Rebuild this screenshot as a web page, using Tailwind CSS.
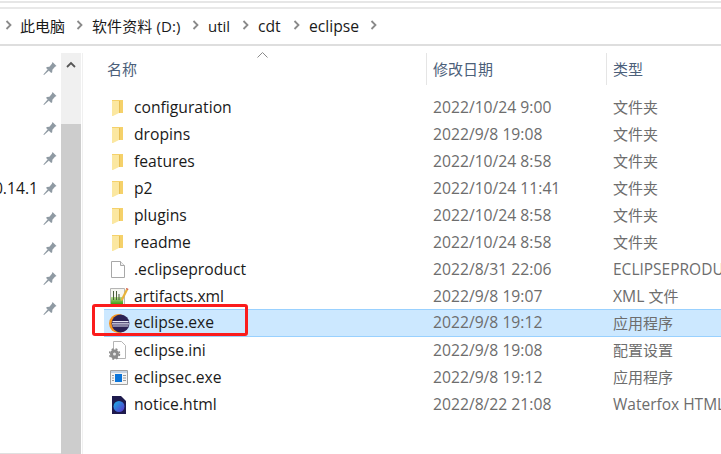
<!DOCTYPE html>
<html>
<head>
<meta charset="utf-8">
<script src="https://cdn.jsdelivr.net/npm/@tailwindcss/browser@4"></script>
</head>
<body class="m-0 bg-white overflow-hidden">
<div class="relative w-[721px] h-[454px] overflow-hidden flex flex-col font-['Open_Sans','Noto_Sans_CJK_SC',sans-serif] text-[15px] bg-white">
  <!-- top chrome -->
  <div class="h-[46px] shrink-0 flex flex-col">
    <div class="h-[2px] mt-px bg-[#e6e6e6]"></div>
    <div class="h-[2px] mt-[4px] bg-[#e8e8e8]"></div>
    <div class="flex-1 flex items-center pl-[5px] text-[#1a1a1a] border-b-2 border-[#dedede]">
      <svg class="w-[7px] h-[10px] mr-[8px] -mt-[4px]" viewBox="0 0 7 10" fill="none" stroke="#8a8a8a" stroke-width="1.8"><path d="M1.5 1l4 4-4 4"/></svg>
      <span class="w-[56px]">此电脑</span>
      <svg class="w-[7px] h-[10px] mr-[9px] -mt-[4px]" viewBox="0 0 7 10" fill="none" stroke="#8a8a8a" stroke-width="1.8"><path d="M1.5 1l4 4-4 4"/></svg>
      <span class="w-[100px] whitespace-nowrap tracking-[0.1px]">软件资料 (D:)</span>
      <svg class="w-[7px] h-[10px] mr-[9px] -mt-[4px]" viewBox="0 0 7 10" fill="none" stroke="#8a8a8a" stroke-width="1.8"><path d="M1.5 1l4 4-4 4"/></svg>
      <span class="w-[34px]">util</span>
      <svg class="w-[7px] h-[10px] mr-[9px] -mt-[4px]" viewBox="0 0 7 10" fill="none" stroke="#8a8a8a" stroke-width="1.8"><path d="M1.5 1l4 4-4 4"/></svg>
      <span class="w-[35px] text-[15.7px]">cdt</span>
      <svg class="w-[7px] h-[10px] mr-[9px] -mt-[4px]" viewBox="0 0 7 10" fill="none" stroke="#8a8a8a" stroke-width="1.8"><path d="M1.5 1l4 4-4 4"/></svg>
      <span class="w-[61px] text-[15.7px]">eclipse</span>
      <svg class="w-[7px] h-[10px] -mt-[4px]" viewBox="0 0 7 10" fill="none" stroke="#8a8a8a" stroke-width="1.8"><path d="M1.5 1l4 4-4 4"/></svg>
    </div>
  </div>
  <div class="flex-1 flex min-h-0">
    <!-- nav pane -->
    <div class="w-[61px] shrink-0 relative border-b border-[#e0e0e0] overflow-hidden">
      <div class="flex flex-col items-end pr-[3px] pt-[14px] gap-[14px]">
        <svg class="w-[16px] h-[16px]" viewBox="0 0 16 16" fill="#8f9aa3"><path d="M10.5 2l4 4-1.5.7-2.6 3-.2 2.6-1 .6-5.1-5 .7-1 2.6-.2 2.5-2.9z"/><path d="M5.8 9.2l1.3 1.3L2 15l-.6-.6z"/></svg>
        <svg class="w-[16px] h-[16px]" viewBox="0 0 16 16" fill="#8f9aa3"><path d="M10.5 2l4 4-1.5.7-2.6 3-.2 2.6-1 .6-5.1-5 .7-1 2.6-.2 2.5-2.9z"/><path d="M5.8 9.2l1.3 1.3L2 15l-.6-.6z"/></svg>
        <svg class="w-[16px] h-[16px]" viewBox="0 0 16 16" fill="#8f9aa3"><path d="M10.5 2l4 4-1.5.7-2.6 3-.2 2.6-1 .6-5.1-5 .7-1 2.6-.2 2.5-2.9z"/><path d="M5.8 9.2l1.3 1.3L2 15l-.6-.6z"/></svg>
        <svg class="w-[16px] h-[16px]" viewBox="0 0 16 16" fill="#8f9aa3"><path d="M10.5 2l4 4-1.5.7-2.6 3-.2 2.6-1 .6-5.1-5 .7-1 2.6-.2 2.5-2.9z"/><path d="M5.8 9.2l1.3 1.3L2 15l-.6-.6z"/></svg>
        <svg class="w-[16px] h-[16px]" viewBox="0 0 16 16" fill="#8f9aa3"><path d="M10.5 2l4 4-1.5.7-2.6 3-.2 2.6-1 .6-5.1-5 .7-1 2.6-.2 2.5-2.9z"/><path d="M5.8 9.2l1.3 1.3L2 15l-.6-.6z"/></svg>
        <svg class="w-[16px] h-[16px]" viewBox="0 0 16 16" fill="#8f9aa3"><path d="M10.5 2l4 4-1.5.7-2.6 3-.2 2.6-1 .6-5.1-5 .7-1 2.6-.2 2.5-2.9z"/><path d="M5.8 9.2l1.3 1.3L2 15l-.6-.6z"/></svg>
        <svg class="w-[16px] h-[16px]" viewBox="0 0 16 16" fill="#8f9aa3"><path d="M10.5 2l4 4-1.5.7-2.6 3-.2 2.6-1 .6-5.1-5 .7-1 2.6-.2 2.5-2.9z"/><path d="M5.8 9.2l1.3 1.3L2 15l-.6-.6z"/></svg>
        <svg class="w-[16px] h-[16px]" viewBox="0 0 16 16" fill="#8f9aa3"><path d="M10.5 2l4 4-1.5.7-2.6 3-.2 2.6-1 .6-5.1-5 .7-1 2.6-.2 2.5-2.9z"/><path d="M5.8 9.2l1.3 1.3L2 15l-.6-.6z"/></svg>
        <svg class="w-[16px] h-[16px]" viewBox="0 0 16 16" fill="#8f9aa3"><path d="M10.5 2l4 4-1.5.7-2.6 3-.2 2.6-1 .6-5.1-5 .7-1 2.6-.2 2.5-2.9z"/><path d="M5.8 9.2l1.3 1.3L2 15l-.6-.6z"/></svg>
      </div>
      <span class="absolute right-[23px] top-[131px] leading-[22px] text-[15.7px] text-[#1a1a1a] whitespace-nowrap">0.14.1</span>
    </div>
    <!-- scrollbar -->
    <div class="w-[20px] shrink-0 bg-[#f0f0f0] flex flex-col mt-[7px]">
      <div class="h-[71px] flex justify-center items-start pt-[8px]">
        <svg class="w-[10px] h-[7px]" viewBox="0 0 10 7" fill="none" stroke="#555" stroke-width="1.8"><path d="M1 6l4-4 4 4"/></svg>
      </div>
      <div class="flex-1 bg-[#cdcdcd]"></div>
    </div>
    <div class="w-[2px] shrink-0 mt-[7px] border-r border-[#f0f0f0]"></div>
    <!-- file list -->
    <div class="flex-1 min-w-0 relative overflow-hidden">
      <div class="flex h-[48px] pt-[7px] text-[#4c607a] relative">
        <div class="w-[343px] pl-[24px] leading-[32px]">名称</div>
        <div class="w-[180px] pl-[6px] leading-[32px] border-l border-[#e5e5e5] h-[32px]">修改日期</div>
        <div class="flex-1 pl-[6px] leading-[32px] border-l border-[#e5e5e5] h-[32px]">类型</div>
        <svg class="absolute left-[174px] top-[6px] w-[11px] h-[6px]" viewBox="0 0 11 6" fill="none" stroke="#8a8a8a"><path d="M.5 5.5l5-5 5 5"/></svg>
      </div>
      <div class="flex flex-col">
        <div class="flex h-[27px] items-center ml-[24px] text-[#6d6d6d] whitespace-nowrap">
          <div class="w-[27px] shrink-0"><svg class="w-[16px] h-[17px] ml-px" viewBox="0 0 16 17"><path d="M4 1h11v13H4z" fill="#f5d16a"/><path d="M4 2h7v12l-6 3H4z" fill="#fbe7a0"/><path d="M11 2h1v12h-1z" fill="#e7bf55"/></svg></div>
          <div class="w-[299px] shrink-0 text-[#1a1a1a] text-[15.7px]">configuration</div>
          <div class="w-[180px] shrink-0 text-[15.7px]">2022/10/24 9:00</div><div>文件夹</div>
        </div>
        <div class="flex h-[27px] items-center ml-[24px] text-[#6d6d6d] whitespace-nowrap">
          <div class="w-[27px] shrink-0"><svg class="w-[16px] h-[17px] ml-px" viewBox="0 0 16 17"><path d="M4 1h11v13H4z" fill="#f5d16a"/><path d="M4 2h7v12l-6 3H4z" fill="#fbe7a0"/><path d="M11 2h1v12h-1z" fill="#e7bf55"/></svg></div>
          <div class="w-[299px] shrink-0 text-[#1a1a1a] text-[15.7px]">dropins</div>
          <div class="w-[180px] shrink-0 text-[15.7px]">2022/9/8 19:08</div><div>文件夹</div>
        </div>
        <div class="flex h-[27px] items-center ml-[24px] text-[#6d6d6d] whitespace-nowrap">
          <div class="w-[27px] shrink-0"><svg class="w-[16px] h-[17px] ml-px" viewBox="0 0 16 17"><path d="M4 1h11v13H4z" fill="#f5d16a"/><path d="M4 2h7v12l-6 3H4z" fill="#fbe7a0"/><path d="M11 2h1v12h-1z" fill="#e7bf55"/></svg></div>
          <div class="w-[299px] shrink-0 text-[#1a1a1a] text-[15.7px]">features</div>
          <div class="w-[180px] shrink-0 text-[15.7px]">2022/10/24 8:58</div><div>文件夹</div>
        </div>
        <div class="flex h-[27px] items-center ml-[24px] text-[#6d6d6d] whitespace-nowrap">
          <div class="w-[27px] shrink-0"><svg class="w-[16px] h-[17px] ml-px" viewBox="0 0 16 17"><path d="M4 1h11v13H4z" fill="#f5d16a"/><path d="M4 2h7v12l-6 3H4z" fill="#fbe7a0"/><path d="M11 2h1v12h-1z" fill="#e7bf55"/></svg></div>
          <div class="w-[299px] shrink-0 text-[#1a1a1a] text-[15.7px]">p2</div>
          <div class="w-[180px] shrink-0 text-[15.7px]">2022/10/24 11:41</div><div>文件夹</div>
        </div>
        <div class="flex h-[27px] items-center ml-[24px] text-[#6d6d6d] whitespace-nowrap">
          <div class="w-[27px] shrink-0"><svg class="w-[16px] h-[17px] ml-px" viewBox="0 0 16 17"><path d="M4 1h11v13H4z" fill="#f5d16a"/><path d="M4 2h7v12l-6 3H4z" fill="#fbe7a0"/><path d="M11 2h1v12h-1z" fill="#e7bf55"/></svg></div>
          <div class="w-[299px] shrink-0 text-[#1a1a1a] text-[15.7px]">plugins</div>
          <div class="w-[180px] shrink-0 text-[15.7px]">2022/10/24 8:58</div><div>文件夹</div>
        </div>
        <div class="flex h-[27px] items-center ml-[24px] text-[#6d6d6d] whitespace-nowrap">
          <div class="w-[27px] shrink-0"><svg class="w-[16px] h-[17px] ml-px" viewBox="0 0 16 17"><path d="M4 1h11v13H4z" fill="#f5d16a"/><path d="M4 2h7v12l-6 3H4z" fill="#fbe7a0"/><path d="M11 2h1v12h-1z" fill="#e7bf55"/></svg></div>
          <div class="w-[299px] shrink-0 text-[#1a1a1a] text-[15.7px]">readme</div>
          <div class="w-[180px] shrink-0 text-[15.7px]">2022/10/24 8:58</div><div>文件夹</div>
        </div>
        <div class="flex h-[27px] items-center ml-[24px] text-[#6d6d6d] whitespace-nowrap">
          <div class="w-[27px] shrink-0"><svg class="w-[16px] h-[17px] ml-[3px]" viewBox="0 0 16 17"><path d="M1.5.5h9l4 4v12h-13z" fill="#fff" stroke="#a8a8a8"/><path d="M10.5.5v4h4" fill="#f0f0f0" stroke="#a8a8a8"/></svg></div>
          <div class="w-[299px] shrink-0 text-[#1a1a1a] text-[15.7px]">.eclipseproduct</div>
          <div class="w-[180px] shrink-0 text-[15.7px]">2022/8/31 22:06</div><div class="text-[15.5px]">ECLIPSEPRODUCT 文件</div>
        </div>
        <div class="flex h-[27px] items-center ml-[24px] text-[#6d6d6d] whitespace-nowrap">
          <div class="w-[27px] shrink-0"><svg class="w-[20px] h-[19px] ml-[2px]" viewBox="0 0 20 19"><defs><linearGradient id="g" x1="0" y1="0" x2="0" y2="1"><stop offset="0" stop-color="#b7dc8e"/><stop offset="1" stop-color="#3fa018"/></linearGradient></defs><path d="M1.5 1.5h14v16h-14z" fill="#f5f5f0" stroke="#b5b5b5"/><path d="M2 17V10h12v7z" fill="url(#g)"/><path d="M4 4h1v9H4zM7 4h1v9H7zM9.5 7h1v6h-1z" fill="#4a5a3a"/><path d="M12 12l5-10 2 1-5 10-2.300 1z" fill="#e8b23a"/><path d="M17 2l2 1 .5-1-2-1z" fill="#c9402a"/></svg></div>
          <div class="w-[299px] shrink-0 text-[#1a1a1a] text-[15.7px]">artifacts.xml</div>
          <div class="w-[180px] shrink-0 text-[15.7px]">2022/9/8 19:07</div><div class="text-[15.7px]">XML <span class="text-[15px]">文件</span></div>
        </div>
        <div class="flex h-[28px] -mt-px items-center ml-[21px] pl-[3px] bg-[#cce8ff] border-y border-[#99d1ff] text-[#6d6d6d] whitespace-nowrap">
          <div class="w-[27px] shrink-0"><svg class="w-[21px] h-[21px] ml-[2px]" viewBox="0 0 21 21"><circle cx="9.500" cy="10.500" r="9.500" fill="#f7941e"/><circle cx="11.500" cy="10.500" r="9" fill="#2c2255"/><path d="M3.500 8h16v1.200h-16zM3 10.200h17.500v1.200H3zM3.500 12.400h16v1.200h-16z" fill="#e4e4f4"/></svg></div>
          <div class="w-[299px] shrink-0 text-[#1a1a1a] text-[15.7px]">eclipse.exe</div>
          <div class="w-[180px] shrink-0 text-[15.7px]">2022/9/8 19:12</div><div>应用程序</div>
        </div>
        <div class="flex h-[27px] items-center ml-[24px] text-[#6d6d6d] whitespace-nowrap">
          <div class="w-[27px] shrink-0"><svg class="w-[18px] h-[19px] ml-[2px]" viewBox="0 0 18 19"><path d="M4.500.5h8l4 4v13h-12z" fill="#fff" stroke="#b5b5b5"/><circle cx="5.500" cy="13" r="4.500" fill="#8c8c8c"/><circle cx="5.500" cy="13" r="5" fill="none" stroke="#8c8c8c" stroke-width="1.500" stroke-dasharray="2 2"/><circle cx="5.500" cy="13" r="1.500" fill="#e8e8e8"/></svg></div>
          <div class="w-[299px] shrink-0 text-[#1a1a1a] text-[15.7px]">eclipse.ini</div>
          <div class="w-[180px] shrink-0 text-[15.7px]">2022/9/8 19:08</div><div>配置设置</div>
        </div>
        <div class="flex h-[27px] items-center ml-[24px] text-[#6d6d6d] whitespace-nowrap">
          <div class="w-[27px] shrink-0"><svg class="w-[18px] h-[15px] ml-[3px]" viewBox="0 0 18 15"><path d="M.5.5h17v14H.5z" fill="#f4f4f4" stroke="#a0a0a0"/><path d="M1 1h16v2H1z" fill="#c4d2e2"/><path d="M5 4h7v8H5z" fill="#0a74d9"/><path d="M2 5h2v1H2zM2 7.500h2v1H2zM2 10h2v1H2zM13 5h3v1h-3zM13 7.500h3v1h-3zM13 10h3v1h-3z" fill="#9a9a9a"/></svg></div>
          <div class="w-[299px] shrink-0 text-[#1a1a1a] text-[15.7px]">eclipsec.exe</div>
          <div class="w-[180px] shrink-0 text-[15.7px]">2022/9/8 19:12</div><div>应用程序</div>
        </div>
        <div class="flex h-[27px] items-center ml-[24px] text-[#6d6d6d] whitespace-nowrap">
          <div class="w-[27px] shrink-0"><svg class="w-[16px] h-[18px] ml-[4px]" viewBox="0 0 16 18"><defs><linearGradient id="b" x1="0" y1="0" x2="1" y2="1"><stop offset="0" stop-color="#19b5e8"/><stop offset="1" stop-color="#5b2fc9"/></linearGradient></defs><path d="M1 0h9l5 5v13H1z" fill="#1e1a4d"/><circle cx="8" cy="10.500" r="5.500" fill="url(#b)"/></svg></div>
          <div class="w-[299px] shrink-0 text-[#1a1a1a] text-[15.7px]">notice.html</div>
          <div class="w-[180px] shrink-0 text-[15.7px]">2022/8/22 21:08</div><div class="text-[15.5px]">Waterfox HTML Document</div>
        </div>
      </div>
    </div>
  </div>
  <!-- annotation -->
  <div class="absolute left-[92px] top-[304px] w-[156px] h-[32px] border-[3px] border-[#fb1c1c] rounded-[3px]"></div>
</div>
</body>
</html>
